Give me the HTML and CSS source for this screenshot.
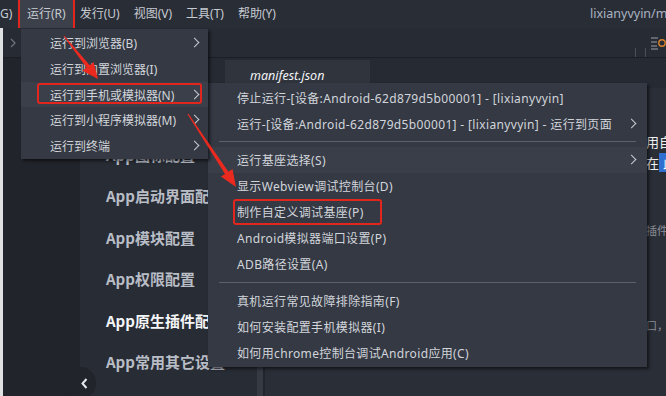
FILE: index.html
```html
<!DOCTYPE html>
<html lang="zh-CN">
<head>
<meta charset="utf-8">
<title>HBuilderX - 运行菜单</title>
<link rel="stylesheet" href="styles.css">
</head>
<body>
<div class="app">
  <header class="menubar">
    <span class="mi mi-cut">G)</span>
    <span class="mi mi-active">运行(R)</span>
    <span class="mi">发行(U)</span>
    <span class="mi">视图(V)</span>
    <span class="mi">工具(T)</span>
    <span class="mi">帮助(Y)</span>
    <span class="spacer"></span>
    <span class="user">lixianyvyin/manifest.json</span>
  </header>

  <div class="below">
    <div class="toolbar">
      <svg class="tb-chev" width="6" height="10" viewBox="0 0 6 10"><polyline points="1,1 5,5 1,9" fill="none" stroke="#6c717a" stroke-width="1.3"/></svg>
      <span class="spacer"></span>
      <span class="tb-ticks"></span>
      <svg class="tb-icon" width="16" height="14" viewBox="0 0 16 14">
        <line x1="1" y1="2" x2="8" y2="2" stroke="#9aa0a8" stroke-width="1"/>
        <line x1="1" y1="6" x2="7" y2="6" stroke="#9aa0a8" stroke-width="1"/>
        <line x1="1" y1="10" x2="7" y2="10" stroke="#9aa0a8" stroke-width="1"/>
        <line x1="1" y1="13" x2="8" y2="13" stroke="#9aa0a8" stroke-width="1"/>
        <circle cx="12" cy="7" r="3.2" fill="none" stroke="#d9822b" stroke-width="1.4"/>
      </svg>
    </div>

    <div class="main">
      <aside class="sidebar"></aside>
      <section class="editor">
        <div class="tabs">
          <div class="tab">manifest.json</div>
        </div>
        <div class="editor-body">
          <nav class="nav">
            <div class="nav-item">基础配置</div>
            <div class="nav-item">App图标配置</div>
            <div class="nav-item">App启动界面配置</div>
            <div class="nav-item">App模块配置</div>
            <div class="nav-item">App权限配置</div>
            <div class="nav-item nav-active">App原生插件配置</div>
            <div class="nav-item">App常用其它设置</div>
            <div class="nav-item">h5配置</div>
          </nav>
          <div class="scrollbar"></div>
          <div class="form">
            <div class="fl fl1">用自定义基座运行</div>
            <div class="fl fl2">在<span class="link">此</span></div>
            <div class="fl fl3">插件</div>
            <div class="fl fl4">口，</div>
          </div>
        </div>
        <div class="collapse">
          <svg width="7" height="11" viewBox="0 0 7 11"><polyline points="5.5,1 1.5,5.5 5.5,10" fill="none" stroke="#e6e8ec" stroke-width="2"/></svg>
        </div>
      </section>
    </div>
  </div>

  <div class="menu menu-main">
    <div class="row"><span class="label">运行到浏览器(B)</span><span class="chev"></span></div>
    <div class="row"><span class="label">运行到内置浏览器(I)</span></div>
    <div class="row row-hover"><span class="label">运行到手机或模拟器(N)</span><span class="chev"></span><span class="redbox rb-main"></span></div>
    <div class="row"><span class="label">运行到小程序模拟器(M)</span><span class="chev"></span></div>
    <div class="row"><span class="label">运行到终端</span><span class="chev"></span></div>
  </div>

  <div class="menu menu-sub">
    <div class="row"><span class="label">停止运行-[设备:Android-62d879d5b00001] - [lixianyvyin]</span></div>
    <div class="row"><span class="label">运行-[设备:Android-62d879d5b00001] - [lixianyvyin] - 运行到页面</span><span class="chev"></span></div>
    <div class="sep"></div>
    <div class="row row-soft"><span class="label">运行基座选择(S)</span><span class="chev"></span></div>
    <div class="row"><span class="label">显示Webview调试控制台(D)</span></div>
    <div class="row"><span class="label">制作自定义调试基座(P)</span><span class="redbox rb-sub"></span></div>
    <div class="row"><span class="label">Android模拟器端口设置(P)</span></div>
    <div class="row"><span class="label">ADB路径设置(A)</span></div>
    <div class="sep sep2"></div>
    <div class="row"><span class="label">真机运行常见故障排除指南(F)</span></div>
    <div class="row"><span class="label">如何安装配置手机模拟器(I)</span></div>
    <div class="row"><span class="label">如何用chrome控制台调试Android应用(C)</span></div>
  </div>

  <svg class="annot" width="666" height="396" viewBox="0 0 666 396">
    <polygon fill="#ea2a1f" points="63.6,36.3 86.5,67.6 82.6,70.7 98,79 93.6,62.1 89.7,65.2 64.4,35.7"/>
    <polygon fill="#ea2a1f" points="187.5,114.3 225,173.9 220.9,176.6 236,187 232.5,169 228.4,171.7 188.5,113.7"/>
  </svg>
</div>
</body>
</html>
```

FILE: styles.css
```css
* { box-sizing: border-box; }
html, body { margin: 0; padding: 0; }
body {
  width: 666px;
  height: 396px;
  overflow: hidden;
  background: #262a33;
  font-family: "Noto Sans", "Noto Sans CJK SC", sans-serif;
  font-size: 12px;
  color: #d0d3d9;
}
.app { position: relative; width: 666px; height: 396px; overflow: hidden; }

/* menubar */
.menubar {
  height: 28px;
  display: flex;
  align-items: stretch;
  background: #292d36;
  white-space: nowrap;
  overflow: hidden;
}
.mi {
  padding: 0 7px;
  line-height: 28px;
  color: #c6cad1;
  font-size: 12px;
  flex-shrink: 0;
}
.mi-cut { padding: 0 8px 0 0; width: 20px; overflow: hidden; }
.mi-active {
  background: #3b404a;
  outline: 2px solid #e3261d;
  border-radius: 1px;
}
.spacer { flex: 1; }
.user {
  line-height: 28px;
  color: #a9b3c2;
  font-size: 12.5px;
  flex-shrink: 0;
  width: 76px;
  overflow: hidden;
}

/* below menubar */
.below {
  border-left: 3px solid #dfe0e2;
  height: 368px;
  display: flex;
  flex-direction: column;
}
.toolbar {
  height: 30px;
  display: flex;
  align-items: center;
  padding-left: 7px;
  background: #272b34;
  border-bottom: 1px solid #1b1e23;
}
.tb-chev { display: block; }
.tb-ticks {
  align-self: flex-end;
  width: 11px;
  height: 9px;
  border-left: 1px solid #4a4f58;
  border-right: 1px solid #4a4f58;
  margin-right: 4px;
}
.tb-icon { display: block; }

.main { flex: 1; display: flex; position: relative; min-height: 0; }
.sidebar { width: 77px; flex-shrink: 0; background: #21242b; }
.editor { flex: 1; min-width: 0; display: flex; flex-direction: column; position: relative; }
.tabs {
  height: 30px;
  flex-shrink: 0;
  display: flex;
  align-items: flex-end;
  padding-left: 145px;
  background: #262a33;
}
.tab {
  width: 145px;
  height: 28px;
  background: #30343d;
  color: #f2f3f5;
  font-style: italic;
  font-size: 12.5px;
  line-height: 31px;
  padding-left: 25px;
}
.editor-body { flex: 1; display: flex; min-height: 0; }
.nav {
  width: 177px;
  flex-shrink: 0;
  background: #282c34;
  padding-top: 4px;
  overflow: hidden;
}
.nav-item {
  height: 41.5px;
  line-height: 41.5px;
  padding-left: 26px;
  font-size: 15px;
  font-weight: 700;
  color: #b8bdc6;
  white-space: nowrap;
  font-family: "Noto Sans CJK SC", sans-serif;
}
.nav-active { color: #f4f5f7; }
.scrollbar { width: 6px; flex-shrink: 0; background: #363a43; }
.form {
  flex: 1;
  min-width: 0;
  background: #2a2e37;
  border-left: 2px solid #22252c;
  padding-left: 381px;
  white-space: nowrap;
  overflow: hidden;
  font-family: "Noto Sans CJK SC", sans-serif;
}
.fl { font-size: 13px; line-height: 20px; }
.fl1 { margin-top: 44px; color: #f0f1f3; }
.fl2 { margin-top: 1px; color: #f0f1f3; }
.link { background: #2f6fd1; color: #fff; padding: 0 4px; }
.fl3 { margin-top: 47px; color: #8c9098; font-size: 11px; }
.fl4 { margin-top: 75px; color: #8c9098; font-size: 11px; }

.collapse {
  position: absolute;
  left: -14px;
  top: 309px;
  width: 30px;
  height: 32px;
  border-radius: 50%;
  background: #21242b;
  display: flex;
  align-items: center;
  justify-content: flex-end;
  padding-right: 8px;
}
.collapse svg { display: block; }

/* menus */
.menu {
  position: absolute;
  background: #343944;
  box-shadow: 2px 2px 3px rgba(0, 0, 0, 0.55);
  white-space: nowrap;
}
.menu-main { left: 21px; top: 29px; width: 187px; padding-top: 1px; z-index: 2; }
.menu-sub { left: 208px; top: 83px; width: 439px; padding: 2px 0 1px; z-index: 1; }
.row {
  position: relative;
  height: 26px;
  display: flex;
  align-items: center;
  padding-left: 29px;
  padding-right: 11px;
  color: #d2d5da;
}
.menu-sub .label { letter-spacing: 0.35px; }
.menu-main .row { padding-right: 9px; }
.menu-main .row-hover { height: 25px; background: #3a3f4a; }
.row-soft { background: #393e49; }
.label { flex: 1; }
.chev {
  width: 6px;
  height: 10px;
  position: relative;
}
.chev::before {
  content: "";
  position: absolute;
  left: -2px;
  top: 1px;
  width: 6px;
  height: 6px;
  border-right: 1.5px solid #c9ccd2;
  border-top: 1.5px solid #c9ccd2;
  transform: rotate(45deg);
}
.sep {
  height: 1px;
  background: #5d6169;
  margin: 4px 11px 5px;
}
.sep2 { margin: 5px 11px 5px; }

.redbox {
  position: absolute;
  border: 2px solid #e3261d;
  border-radius: 3px;
}
.rb-main { left: 16px; top: 1px; width: 165px; height: 21px; }
.rb-sub { left: 25px; top: 0; width: 149px; height: 26px; }

.annot {
  position: absolute;
  left: 0;
  top: 0;
  pointer-events: none;
  z-index: 5;
}
```
